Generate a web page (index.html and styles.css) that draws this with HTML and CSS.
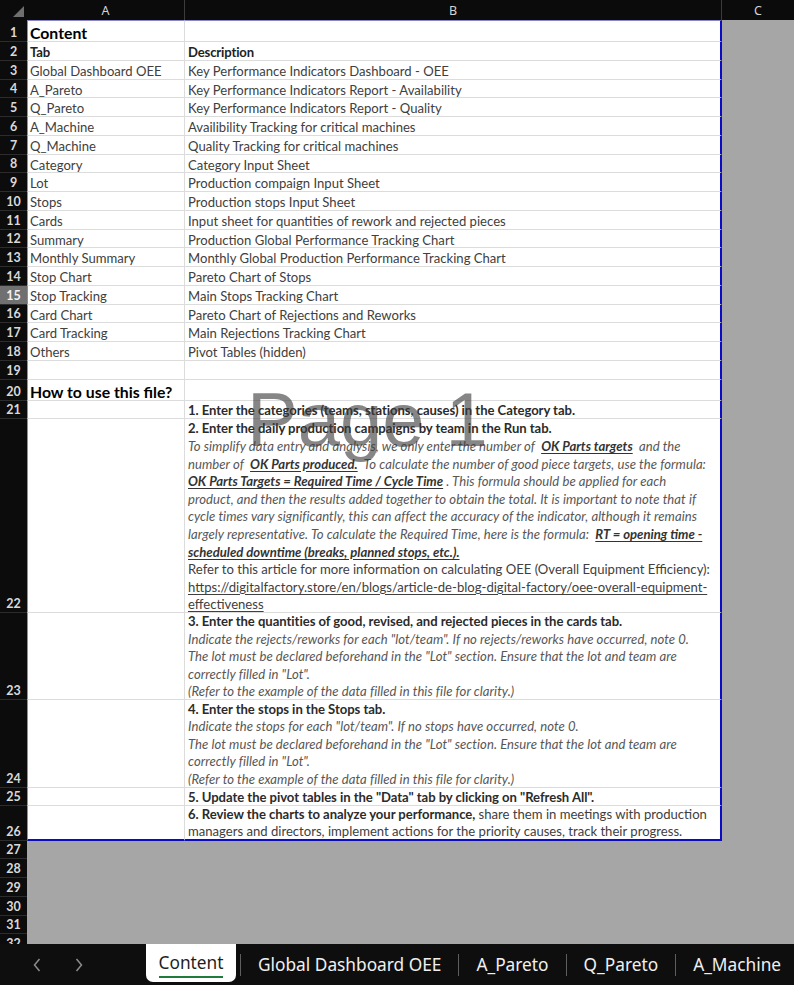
FILE: index.html
```html
<!DOCTYPE html>
<html lang="en">
<head>
<meta charset="utf-8">
<title>Content</title>
<link rel="stylesheet" href="styles.css">
</head>
<body>
<div class="app">
  <div class="sheet">
    <div class="colheads">
      <div class="corner"><svg width="27" height="20" viewBox="0 0 27 20"><polygon points="24,6 24,17 13,17" fill="#6f6f6f"/></svg></div>
      <div class="ch">A</div>
      <div class="ch">B</div>
      <div class="ch last">C</div>
    </div>

    <div class="row r1"><div class="rh">1</div><div class="cell cA top title"><p>Content</p></div><div class="cell cB top"></div><div class="out"></div></div>
    <div class="row"><div class="rh">2</div><div class="cell cA hdr"><p>Tab</p></div><div class="cell cB hdr"><p>Description</p></div><div class="out"></div></div>
    <div class="row"><div class="rh">3</div><div class="cell cA"><p>Global Dashboard OEE</p></div><div class="cell cB"><p>Key Performance Indicators Dashboard - OEE</p></div><div class="out"></div></div>
    <div class="row"><div class="rh">4</div><div class="cell cA"><p>A_Pareto</p></div><div class="cell cB"><p>Key Performance Indicators Report - Availability</p></div><div class="out"></div></div>
    <div class="row"><div class="rh">5</div><div class="cell cA"><p>Q_Pareto</p></div><div class="cell cB"><p>Key Performance Indicators Report - Quality</p></div><div class="out"></div></div>
    <div class="row"><div class="rh">6</div><div class="cell cA"><p>A_Machine</p></div><div class="cell cB"><p>Availibility Tracking for critical machines</p></div><div class="out"></div></div>
    <div class="row"><div class="rh">7</div><div class="cell cA"><p>Q_Machine</p></div><div class="cell cB"><p>Quality Tracking for critical machines</p></div><div class="out"></div></div>
    <div class="row"><div class="rh">8</div><div class="cell cA"><p>Category</p></div><div class="cell cB"><p>Category Input Sheet</p></div><div class="out"></div></div>
    <div class="row"><div class="rh">9</div><div class="cell cA"><p>Lot</p></div><div class="cell cB"><p>Production compaign Input Sheet</p></div><div class="out"></div></div>
    <div class="row"><div class="rh">10</div><div class="cell cA"><p>Stops</p></div><div class="cell cB"><p>Production stops Input Sheet</p></div><div class="out"></div></div>
    <div class="row"><div class="rh">11</div><div class="cell cA"><p>Cards</p></div><div class="cell cB"><p>Input sheet for quantities of rework and rejected pieces</p></div><div class="out"></div></div>
    <div class="row"><div class="rh">12</div><div class="cell cA"><p>Summary</p></div><div class="cell cB"><p>Production Global Performance Tracking Chart</p></div><div class="out"></div></div>
    <div class="row"><div class="rh">13</div><div class="cell cA"><p>Monthly Summary</p></div><div class="cell cB"><p>Monthly Global Production Performance Tracking Chart</p></div><div class="out"></div></div>
    <div class="row"><div class="rh">14</div><div class="cell cA"><p>Stop Chart</p></div><div class="cell cB"><p>Pareto Chart of Stops</p></div><div class="out"></div></div>
    <div class="row"><div class="rh sel">15</div><div class="cell cA"><p>Stop Tracking</p></div><div class="cell cB"><p>Main Stops Tracking Chart</p></div><div class="out"></div></div>
    <div class="row"><div class="rh">16</div><div class="cell cA"><p>Card Chart</p></div><div class="cell cB"><p>Pareto Chart of Rejections and Reworks</p></div><div class="out"></div></div>
    <div class="row"><div class="rh">17</div><div class="cell cA"><p>Card Tracking</p></div><div class="cell cB"><p>Main Rejections Tracking Chart</p></div><div class="out"></div></div>
    <div class="row"><div class="rh">18</div><div class="cell cA"><p>Others</p></div><div class="cell cB"><p>Pivot Tables (hidden)</p></div><div class="out"></div></div>
    <div class="row"><div class="rh">19</div><div class="cell cA"></div><div class="cell cB"></div><div class="out"></div></div>
    <div class="row r20"><div class="rh">20</div><div class="cell cA title"><p>How to use this file?</p></div><div class="cell cB"></div><div class="out"></div></div>
    <div class="row r21"><div class="rh">21</div><div class="cell cA"></div><div class="cell cB"><p class="step">1. Enter the categories (teams, stations, causes) in the Category tab.</p></div><div class="out"></div></div>
    <div class="row r22"><div class="rh">22</div><div class="cell cA"></div>
      <div class="cell cB">
        <p class="step">2. Enter the daily production campaigns by team in the Run tab.</p>
        <p class="it">To simplify data entry and analysis, we only enter the number of &nbsp;<b class="ul">OK Parts targets</b>&nbsp; and the</p>
        <p class="it">number of &nbsp;<b class="ul">OK Parts produced.</b>&nbsp; To calculate the number of good piece targets, use the formula:</p>
        <p class="it"><b class="ul">OK Parts Targets = Required Time / Cycle Time</b> . This formula should be applied for each</p>
        <p class="it">product, and then the results added together to obtain the total. It is important to note that if</p>
        <p class="it">cycle times vary significantly, this can affect the accuracy of the indicator, although it remains</p>
        <p class="it">largely representative. To calculate the Required Time, here is the formula: &nbsp;<b class="ul">RT = opening time -</b></p>
        <p class="it"><b class="ul">scheduled downtime (breaks, planned stops, etc.).</b></p>
        <p>Refer to this article for more information on calculating OEE (Overall Equipment Efficiency):</p>
        <p class="ul">https://digitalfactory.store/en/blogs/article-de-blog-digital-factory/oee-overall-equipment-</p>
        <p class="ul">effectiveness</p>
      </div><div class="out"></div></div>
    <div class="row r23"><div class="rh">23</div><div class="cell cA"></div>
      <div class="cell cB">
        <p class="step">3. Enter the quantities of good, revised, and rejected pieces in the cards tab.</p>
        <p class="it">Indicate the rejects/reworks for each "lot/team". If no rejects/reworks have occurred, note 0.</p>
        <p class="it">The lot must be declared beforehand in the "Lot" section. Ensure that the lot and team are</p>
        <p class="it">correctly filled in "Lot".</p>
        <p class="it">(Refer to the example of the data filled in this file for clarity.)</p>
      </div><div class="out"></div></div>
    <div class="row r24"><div class="rh">24</div><div class="cell cA"></div>
      <div class="cell cB">
        <p class="step">4. Enter the stops in the Stops tab.</p>
        <p class="it">Indicate the stops for each "lot/team". If no stops have occurred, note 0.</p>
        <p class="it">The lot must be declared beforehand in the "Lot" section. Ensure that the lot and team are</p>
        <p class="it">correctly filled in "Lot".</p>
        <p class="it">(Refer to the example of the data filled in this file for clarity.)</p>
      </div><div class="out"></div></div>
    <div class="row r25"><div class="rh">25</div><div class="cell cA"></div><div class="cell cB"><p class="step">5. Update the pivot tables in the "Data" tab by clicking on "Refresh All".</p></div><div class="out"></div></div>
    <div class="row r26"><div class="rh">26</div><div class="cell cA bot"></div>
      <div class="cell cB bot">
        <p><b class="stepb">6. Review the charts to analyze your performance,</b> share them in meetings with production</p>
        <p>managers and directors, implement actions for the priority causes, track their progress.</p>
      </div><div class="out"></div></div>
    <div class="row rx"><div class="rh">27</div><div class="out span"></div></div>
    <div class="row rx"><div class="rh">28</div><div class="out span"></div></div>
    <div class="row rx"><div class="rh">29</div><div class="out span"></div></div>
    <div class="row rx"><div class="rh">30</div><div class="out span"></div></div>
    <div class="row rx"><div class="rh">31</div><div class="out span"></div></div>
    <div class="row rx"><div class="rh">32</div><div class="out span"></div></div>

    <div class="watermark">Page 1</div>
  </div>

  <div class="tabbar">
    <div class="nav">
      <svg class="chev" width="10" height="16" viewBox="0 0 10 16"><polyline points="7.5,2 2.5,8 7.5,14" fill="none" stroke="#8c8c8c" stroke-width="1.5"/></svg>
      <svg class="chev" width="10" height="16" viewBox="0 0 10 16"><polyline points="2.5,2 7.5,8 2.5,14" fill="none" stroke="#8c8c8c" stroke-width="1.5"/></svg>
    </div>
    <div class="tab active"><span>Content</span></div>
    <div class="sep"></div>
    <div class="tab">Global Dashboard OEE</div>
    <div class="sep"></div>
    <div class="tab">A_Pareto</div>
    <div class="sep"></div>
    <div class="tab">Q_Pareto</div>
    <div class="sep"></div>
    <div class="tab">A_Machine</div>
  </div>
</div>
</body>
</html>
```

FILE: styles.css
```css
* { box-sizing: border-box; margin: 0; padding: 0; }
html, body { width: 794px; height: 985px; overflow: hidden; background: #0e0e0e; }
body { font-family: Lato, "Liberation Sans", sans-serif; }

.app { display: flex; flex-direction: column; height: 985px; }

.sheet { position: relative; height: 944px; overflow: hidden; background: #a6a6a6; flex: none; }

.colheads {
  display: grid;
  grid-template-columns: 27px 158px 537px 1fr;
  height: 20px;
  background: #0b0b0b;
  color: #d4d4d4;
  font-family: "Noto Sans", sans-serif;
  font-size: 12.5px;
}
.colheads > div { display: flex; align-items: center; justify-content: center; border-right: 1px solid #3c3c3c; }
.colheads .corner { border-right: none; }
.colheads .last { border-right: none; }

.row {
  display: grid;
  grid-template-columns: 27px 158px 537px 1fr;
  height: 18.75px;
}
.r1 { height: 22px; }
.r20 { height: 21px; }
.r21 { height: 18.5px; }
.r22 { height: 194px; }
.r23 { height: 87px; }
.r24 { height: 87.5px; }
.r25 { height: 18px; }
.r26 { height: 35px; }
.rx { height: 18.8px; }

.rh {
  background: #0c0c0c;
  color: #d9d9d9;
  font-weight: 700;
  font-size: 12.5px;
  line-height: 16px;
  display: flex;
  align-items: flex-end;
  justify-content: center;
  border-bottom: 1px solid #2c2c2c;
}
.rh.sel { background: #707070; color: #f2f2f2; }

.cell {
  background: #fff;
  border-right: 1px solid #dcdcdc;
  border-bottom: 1px solid #dcdcdc;
  padding: 0 3px;
  display: flex;
  flex-direction: column;
  justify-content: flex-end;
  font-size: 13.1px;
  line-height: 17.6px;
  color: #404040;
  white-space: nowrap;
}
.cell p { display: block; }
.cell p:last-child { margin-bottom: -2px; }
.cA { border-left: 1px solid #8a88cc; padding-left: 2px; }
.cB { border-right: 2px solid #0a0ac8; }
.top { border-top: 1px solid #8a88cc; }
.bot { border-bottom: 2px solid #0a0ac8; }

.title { font-weight: 700; font-size: 15.8px; color: #000; line-height: 19px; }
.title p:last-child { margin-bottom: -1px; }
.hdr { font-weight: 700; color: #222; letter-spacing: -0.15px; }

.out { background: #a6a6a6; }
.out.span { grid-column: 2 / 5; }

.step { font-weight: 700; color: #2b2b2b; letter-spacing: -0.05px; }
.stepb { font-weight: 700; color: #2b2b2b; letter-spacing: -0.05px; }
.it { font-style: italic; color: #575757; letter-spacing: 0.05px; }
.it b { color: #333; letter-spacing: 0; }
.ul { text-decoration: underline; text-underline-offset: 2px; }

.watermark {
  position: absolute;
  left: 247px;
  top: 382px;
  font-family: "Liberation Sans", Arial, sans-serif;
  font-size: 76px;
  line-height: 1;
  color: rgba(60, 60, 60, 0.62);
  white-space: nowrap;
  pointer-events: none;
}

.tabbar {
  height: 41px;
  flex: none;
  display: flex;
  align-items: flex-start;
  background: #0e0e0e;
  font-family: "Noto Sans", sans-serif;
  font-size: 17.3px;
  color: #f0f0f0;
  overflow: hidden;
}
.tabbar > * { flex: none; }
.nav { width: 146px; height: 41px; display: flex; align-items: center; padding-left: 32px; gap: 32px; }
.chev { display: block; }
.tab { height: 41px; display: flex; align-items: center; padding: 0 17px; white-space: nowrap; }
.tab.active {
  width: 90px;
  height: 38px;
  padding: 0;
  justify-content: center;
  background: #fff;
  color: #1e1e1e;
  border-radius: 0 0 7px 7px;
  margin-right: 4px;
}
.tab.active span { border-bottom: 2px solid #1f7a3c; padding-bottom: 3px; line-height: 20px; margin-top: 4px; }
.sep { width: 1px; height: 22px; margin-top: 10px; background: #5e5e5e; }
```
